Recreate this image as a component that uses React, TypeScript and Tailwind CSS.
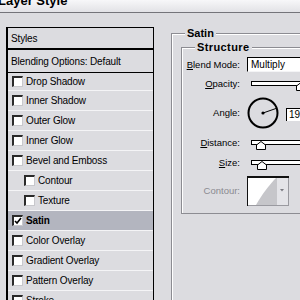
import React from "react";

const styleRows = [
  { label: "Drop Shadow" },
  { label: "Inner Shadow" },
  { label: "Outer Glow" },
  { label: "Inner Glow" },
  { label: "Bevel and Emboss" },
  { label: "Contour", indent: true },
  { label: "Texture", indent: true },
  { label: "Satin", checked: true },
  { label: "Color Overlay" },
  { label: "Gradient Overlay" },
  { label: "Pattern Overlay" },
  { label: "Stroke" },
];

const Checkbox = ({ checked }: { checked?: boolean }) => (
  <div className="w-[11px] h-[11px] shrink-0 bg-white border-t-2 border-l-2 border-t-[#2a2a2a] border-l-[#2a2a2a] border-r border-b border-r-[#c8c8cc] border-b-[#c8c8cc] flex items-center justify-center">
    {checked && (
      <svg width="8" height="8" viewBox="0 0 8 8">
        <path d="M1 4 L3 6 L7 1" stroke="#000" strokeWidth="1.6" fill="none" />
      </svg>
    )}
  </div>
);

const Thumb = () => (
  <svg width="10" height="9" viewBox="0 0 10 9">
    <polygon points="5,0.5 9.5,4 9.5,8.5 0.5,8.5 0.5,4" fill="#fff" stroke="#000" strokeWidth="1" />
  </svg>
);

// slider: track + thumb laid over it
const Slider = ({ at }: { at: number }) => (
  <div className="relative flex-1 h-[15px]">
    <div className="ml-[4px] mt-[5px] h-[5px] w-[80px] bg-white border border-black" />
    <div className="absolute top-[6px]" style={{ left: at }}>
      <Thumb />
    </div>
  </div>
);

const Label = ({ children, dim }: { children: React.ReactNode; dim?: boolean }) => (
  <div className={`w-[58px] shrink-0 text-right text-[9.5px] leading-[12px] ${dim ? "text-[#8a8a90]" : "text-black"}`}>
    {children}
  </div>
);

export default function App() {
  return (
    <div className="w-[300px] h-[300px] overflow-hidden bg-[#dcdce0] font-['Liberation_Sans',Arial,sans-serif] text-black">
      <div className="h-[13px] overflow-hidden border-b border-[#74747a] bg-gradient-to-b from-[#f7f7f9] to-[#e2e2e6]">
        <div className="-ml-[2px] -mt-[6px] text-[13px] font-bold leading-[13px]">Layer Style</div>
      </div>

      <div className="flex">
        {/* left list */}
        <div className="ml-[6px] mt-[14px] w-[148px] shrink-0 border-t border-r border-black border-l-2 h-[300px] tracking-[-0.15px]">
          <div className="h-[22px] border-b-2 border-black pl-[3px] flex items-center text-[10px]">Styles</div>
          <div className="h-[23px] border-b border-black pl-[3px] flex items-center text-[10px]">
            Blending Options: Default
          </div>
          {styleRows.map((r, i) => (
            <div
              key={r.label}
              className={`${i === 0 ? "h-[18px]" : "h-[20px]"} border-b border-[#f4f4f6] flex items-center gap-[3px] text-[10px] ${
                r.indent ? "pl-[16px]" : "pl-[4px]"
              } ${r.checked ? "bg-[#b3b5bf] font-bold" : ""}`}
            >
              <Checkbox checked={r.checked} />
              <span>{r.label}</span>
            </div>
          ))}
        </div>

        {/* right side */}
        <div className="flex-1 mt-[20px] ml-[17px] h-[300px] relative border-l border-t border-[#8c8c92] shadow-[inset_1px_1px_0_#ffffff]">
          <div className="absolute left-[13px] -top-[8px] px-[2px] bg-[#dcdce0] text-[11px] font-bold leading-[14px]">Satin</div>

          <div className="relative mt-[13px] ml-[9px] h-[167px] border-l border-t border-b border-[#8c8c92] shadow-[inset_1px_1px_0_#ffffff]">
            <div className="absolute left-[13px] -top-[8px] px-[2px] bg-[#dcdce0] text-[11px] font-bold leading-[14px] tracking-[0.4px]">
              Structure
            </div>

            <div className="flex flex-col">
              <div className="mt-[9px] h-[15px] flex items-center gap-[7px]">
                <Label>
                  <span className="underline">B</span>lend Mode:
                </Label>
                <div className="h-[15px] w-[70px] bg-white border-t border-l border-black border-b border-b-[#f4f4f6] pl-[3px] text-[10px] leading-[13px]">
                  Multiply
                </div>
              </div>

              <div className="mt-[4px] h-[15px] flex items-center">
                <Label>
                  <span className="underline">O</span>pacity:
                </Label>
                <div className="w-[7px]" />
                <Slider at={49} />
              </div>

              <div className="mt-[6px] h-[32px] flex items-center">
                <Label>Angle:</Label>
                <svg className="ml-[7px] shrink-0" width="32" height="32" viewBox="0 0 32 32">
                  <circle cx="16" cy="16" r="14.5" fill="none" stroke="#000" strokeWidth="2" />
                  <line x1="16" y1="16" x2="29.5" y2="11.3" stroke="#000" strokeWidth="1" />
                  <circle cx="16" cy="16" r="1.6" fill="#000" />
                </svg>
                <div className="ml-[7px] mt-[2px] h-[13px] w-[30px] shrink-0 bg-white border-t border-l border-black pl-[2px] text-[10px] leading-[12px]">
                  19
                </div>
              </div>

              <div className="mt-[6px] h-[15px] flex items-center">
                <Label>
                  <span className="underline">D</span>istance:
                </Label>
                <div className="w-[7px]" />
                <Slider at={9} />
              </div>

              <div className="mt-[5px] h-[15px] flex items-center">
                <Label>
                  <span className="underline">S</span>ize:
                </Label>
                <div className="w-[7px]" />
                <Slider at={10} />
              </div>

              <div className="mt-[6px] h-[30px] flex items-center">
                <Label dim>Contour:</Label>
                <svg className="ml-[7px] shrink-0" width="42" height="30" viewBox="0 0 42 30">
                  <rect x="0" y="0" width="42" height="30" fill="#9a9aa0" />
                  <rect x="1" y="2" width="29" height="27" fill="#ffffff" />
                  <path d="M9 29 C14 20, 22 9, 29 2 L30 2 L30 29 Z" fill="#c6c6ca" />
                  <rect x="30" y="2" width="11" height="27" fill="#e4e4e8" />
                  <polygon points="33,13 37,13 35,15.5" fill="#7a7a80" />
                  <rect x="0" y="0" width="42" height="2" fill="#111" />
                  <rect x="0" y="0" width="1" height="30" fill="#111" />
                </svg>
              </div>
            </div>
          </div>
        </div>
      </div>
    </div>
  );
}
